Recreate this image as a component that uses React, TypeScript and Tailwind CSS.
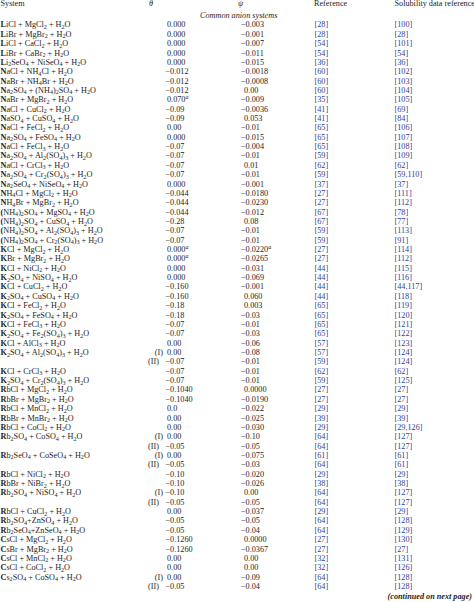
import React from "react";

type Row = {
  sys?: string;
  label?: string;
  t: string;
  ta?: boolean;
  p: string;
  pa?: boolean;
  ref: string;
  sol: string;
};

const rows: Row[] = [
  { sys: "LiCl + MgCl2 + H2O", t: "0.000", p: "-0.003", ref: "[28]", sol: "[100]" },
  { sys: "LiBr + MgBr2 + H2O", t: "0.000", p: "-0.001", ref: "[28]", sol: "[28]" },
  { sys: "LiCl + CaCl2 + H2O", t: "0.000", p: "-0.007", ref: "[54]", sol: "[101]" },
  { sys: "LiBr + CaBr2 + H2O", t: "0.000", p: "-0.011", ref: "[54]", sol: "[54]" },
  { sys: "Li2SeO4 + NiSeO4 + H2O", t: "0.000", p: "-0.015", ref: "[36]", sol: "[36]" },
  { sys: "NaCl + NH4Cl + H2O", t: "-0.012", p: "-0.0018", ref: "[60]", sol: "[102]" },
  { sys: "NaBr + NH4Br + H2O", t: "-0.012", p: "-0.0008", ref: "[60]", sol: "[103]" },
  { sys: "Na2SO4 + (NH4)2SO4 + H2O", t: "-0.012", p: "0.00", ref: "[60]", sol: "[104]" },
  { sys: "NaBr + MgBr2 + H2O", t: "0.070", ta: true, p: "-0.009", ref: "[35]", sol: "[105]" },
  { sys: "NaCl + CuCl2 + H2O", t: "-0.09", p: "-0.0036", ref: "[41]", sol: "[69]" },
  { sys: "NaSO4 + CuSO4 + H2O", t: "-0.09", p: "0.053", ref: "[41]", sol: "[84]" },
  { sys: "NaCl + FeCl2 + H2O", t: "0.00", p: "-0.01", ref: "[65]", sol: "[106]" },
  { sys: "Na2SO4 + FeSO4 + H2O", t: "0.000", p: "-0.015", ref: "[65]", sol: "[107]" },
  { sys: "NaCl + FeCl3 + H2O", t: "-0.07", p: "-0.004", ref: "[65]", sol: "[108]" },
  { sys: "Na2SO4 + Al2(SO4)3 + H2O", t: "-0.07", p: "-0.01", ref: "[59]", sol: "[109]" },
  { sys: "NaCl + CrCl3 + H2O", t: "-0.07", p: "0.01", ref: "[62]", sol: "[62]" },
  { sys: "Na2SO4 + Cr2(SO4)3 + H2O", t: "-0.07", p: "-0.01", ref: "[59]", sol: "[59,110]" },
  { sys: "Na2SeO4 + NiSeO4 + H2O", t: "0.000", p: "-0.001", ref: "[37]", sol: "[37]" },
  { sys: "NH4Cl + MgCl2 + H2O", t: "-0.044", p: "-0.0180", ref: "[27]", sol: "[111]" },
  { sys: "NH4Br + MgBr2 + H2O", t: "-0.044", p: "-0.0230", ref: "[27]", sol: "[112]" },
  { sys: "(NH4)2SO4 + MgSO4 + H2O", t: "-0.044", p: "-0.012", ref: "[67]", sol: "[78]" },
  { sys: "(NH4)2SO4 + CuSO4 + H2O", t: "-0.28", p: "0.08", ref: "[67]", sol: "[77]" },
  { sys: "(NH4)2SO4 + Al2(SO4)3 + H2O", t: "-0.07", p: "-0.01", ref: "[59]", sol: "[113]" },
  { sys: "(NH4)2SO4 + Cr2(SO4)3 + H2O", t: "-0.07", p: "-0.01", ref: "[59]", sol: "[91]" },
  { sys: "KCl + MgCl2 + H2O", t: "0.000", ta: true, p: "-0.0220", pa: true, ref: "[27]", sol: "[114]" },
  { sys: "KBr + MgBr2 + H2O", t: "0.000", ta: true, p: "-0.0265", ref: "[27]", sol: "[112]" },
  { sys: "KCl + NiCl2 + H2O", t: "0.000", p: "-0.031", ref: "[44]", sol: "[115]" },
  { sys: "K2SO4 + NiSO4 + H2O", t: "0.000", p: "-0.069", ref: "[44]", sol: "[116]" },
  { sys: "KCl + CuCl2 + H2O", t: "-0.160", p: "-0.001", ref: "[44]", sol: "[44,117]" },
  { sys: "K2SO4 + CuSO4 + H2O", t: "-0.160", p: "0.060", ref: "[44]", sol: "[118]" },
  { sys: "KCl + FeCl2 + H2O", t: "-0.18", p: "0.003", ref: "[65]", sol: "[119]" },
  { sys: "K2SO4 + FeSO4 + H2O", t: "-0.18", p: "-0.03", ref: "[65]", sol: "[120]" },
  { sys: "KCl + FeCl3 + H2O", t: "-0.07", p: "-0.01", ref: "[65]", sol: "[121]" },
  { sys: "K2SO4 + Fe2(SO4)3 + H2O", t: "-0.07", p: "-0.03", ref: "[65]", sol: "[122]" },
  { sys: "KCl + AlCl3 + H2O", t: "0.00", p: "-0.06", ref: "[57]", sol: "[123]" },
  { sys: "K2SO4 + Al2(SO4)3 + H2O", label: "(I)", t: "0.00", p: "-0.08", ref: "[57]", sol: "[124]" },
  { label: "(II)", t: "-0.07", p: "-0.01", ref: "[59]", sol: "[124]" },
  { sys: "KCl + CrCl3 + H2O", t: "-0.07", p: "-0.01", ref: "[62]", sol: "[62]" },
  { sys: "K2SO4 + Cr2(SO4)3 + H2O", t: "-0.07", p: "-0.01", ref: "[59]", sol: "[125]" },
  { sys: "RbCl + MgCl2 + H2O", t: "-0.1040", p: "0.0000", ref: "[27]", sol: "[27]" },
  { sys: "RbBr + MgBr2 + H2O", t: "-0.1040", p: "-0.0190", ref: "[27]", sol: "[27]" },
  { sys: "RbCl + MnCl2 + H2O", t: "0.0", p: "-0.022", ref: "[29]", sol: "[29]" },
  { sys: "RbBr + MnBr2 + H2O", t: "0.00", p: "-0.025", ref: "[39]", sol: "[39]" },
  { sys: "RbCl + CoCl2 + H2O", t: "0.00", p: "-0.030", ref: "[29]", sol: "[29,126]" },
  { sys: "Rb2SO4 + CoSO4 + H2O", label: "(I)", t: "0.00", p: "-0.10", ref: "[64]", sol: "[127]" },
  { label: "(II)", t: "-0.05", p: "-0.05", ref: "[64]", sol: "[127]" },
  { sys: "Rb2SeO4 + CoSeO4 + H2O", label: "(I)", t: "0.00", p: "-0.075", ref: "[61]", sol: "[61]" },
  { label: "(II)", t: "-0.05", p: "-0.03", ref: "[64]", sol: "[61]" },
  { sys: "RbCl + NiCl2 + H2O", t: "-0.10", p: "-0.020", ref: "[29]", sol: "[29]" },
  { sys: "RbBr + NiBr2 + H2O", t: "-0.10", p: "-0.026", ref: "[38]", sol: "[38]" },
  { sys: "Rb2SO4 + NiSO4 + H2O", label: "(I)", t: "-0.10", p: "0.00", ref: "[64]", sol: "[127]" },
  { label: "(II)", t: "-0.05", p: "-0.05", ref: "[64]", sol: "[127]" },
  { sys: "RbCl + CuCl2 + H2O", t: "0.00", p: "-0.037", ref: "[29]", sol: "[29]" },
  { sys: "Rb2SO4+ZnSO4 + H2O", t: "-0.05", p: "-0.05", ref: "[64]", sol: "[128]" },
  { sys: "Rb2SeO4+ZnSeO4 + H2O", t: "-0.05", p: "-0.04", ref: "[64]", sol: "[129]" },
  { sys: "CsCl + MgCl2 + H2O", t: "-0.1260", p: "0.0000", ref: "[27]", sol: "[130]" },
  { sys: "CsBr + MgBr2 + H2O", t: "-0.1260", p: "-0.0367", ref: "[27]", sol: "[27]" },
  { sys: "CsCl + MnCl2 + H2O", t: "0.00", p: "0.00", ref: "[32]", sol: "[131]" },
  { sys: "CsCl + CoCl2 + H2O", t: "0.00", p: "0.00", ref: "[32]", sol: "[126]" },
  { sys: "Cs2SO4 + CoSO4 + H2O", label: "(I)", t: "0.00", p: "-0.09", ref: "[64]", sol: "[128]" },
  { label: "(II)", t: "-0.05", p: "-0.04", ref: "[64]", sol: "[128]" },
];

function Formula({ text }: { text: string }) {
  const out: React.ReactNode[] = [];
  let buf = "";
  const flush = () => {
    if (buf) {
      out.push(buf);
      buf = "";
    }
  };
  out.push(
    <span key="f" className="font-bold">
      {text[0]}
    </span>
  );
  for (let i = 1; i < text.length; i++) {
    const c = text[i];
    const prev = text[i - 1];
    if (/[0-9]/.test(c) && /[A-Za-z)]/.test(prev)) {
      flush();
      out.push(<sub key={i}>{c}</sub>);
    } else {
      buf += c;
    }
  }
  flush();
  return <>{out}</>;
}

function Num({ v, sup, pos }: { v: string; sup?: boolean; pos: string }) {
  const neg = v.startsWith("-");
  const txt = neg ? "\u2212" + v.slice(1) : v;
  return (
    <span className={neg ? "" : pos}>
      {txt}
      {sup && <sup className="italic">a</sup>}
    </span>
  );
}

export default function App() {
  return (
    <div
      className="w-[474px] h-[602px] overflow-hidden bg-white text-[#1e1e1e] text-[8.2px] leading-[9.36px] whitespace-nowrap"
      style={{ fontFamily: '"Liberation Serif", "Times New Roman", serif' }}
    >
      {/* header */}
      <div className="flex h-[9.36px] -mt-[1.2px]">
        <div className="w-[149px] shrink-0 pl-[0.5px]">System</div>
        <div className="w-[89px] shrink-0 italic">θ</div>
        <div className="w-[76px] shrink-0 italic">ψ</div>
        <div className="w-[80.5px] shrink-0">Reference</div>
        <div className="shrink-0">Solubility data reference</div>
      </div>
      <div className="h-[9.36px] mt-[2.9px] pl-[200px] italic">Common anion systems</div>
      {rows.map((r, idx) => (
        <div key={idx} className="flex h-[9.36px]">
          <div className="w-[146px] shrink-0 pl-[0.5px]">{r.sys ? <Formula text={r.sys} /> : null}</div>
          <div className="w-[95px] shrink-0 flex">
            <span className={"w-[17px] shrink-0 text-right " + (r.label === "(II)" ? "pr-[4px]" : "")}>
              {r.label ?? ""}
            </span>
            <span className="ml-[2.5px]">
              <Num v={r.t} sup={r.ta} pos="pl-[1.5px]" />
            </span>
          </div>
          <div className="w-[73.5px] shrink-0">
            <Num v={r.p} sup={r.pa} pos="pl-[3px]" />
          </div>
          <div className="w-[80px] shrink-0 text-[#33409a]">{r.ref}</div>
          <div className="shrink-0 text-[#33409a]">{r.sol}</div>
        </div>
      ))}
      <div className="mt-[0.7px] h-[9.36px] flex justify-end pr-[2px]">
        <span className="italic font-semibold">(continued on next page)</span>
      </div>
    </div>
  );
}
